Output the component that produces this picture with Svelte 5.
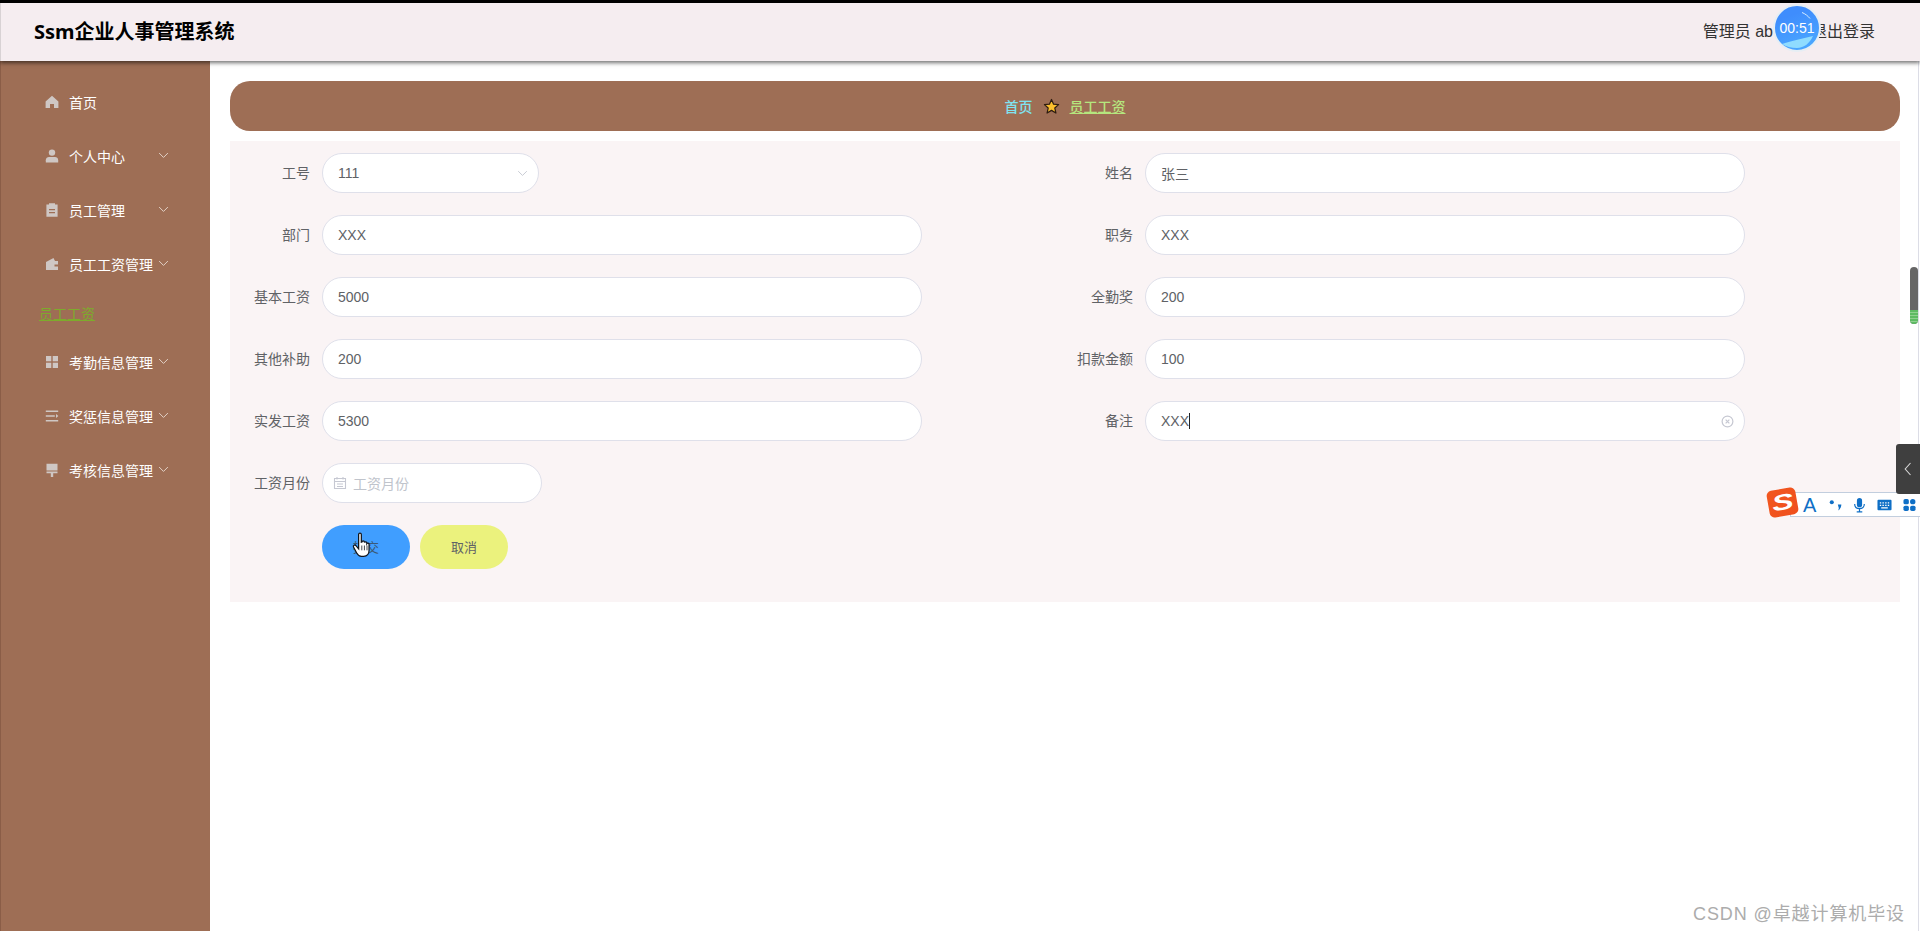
<script>
  const menu = [
    { label: '首页', icon: 'home', arrow: false },
    { label: '个人中心', icon: 'user', arrow: true },
    { label: '员工管理', icon: 'order', arrow: true },
    { label: '员工工资管理', icon: 'wallet', arrow: true, sub: '员工工资' },
    { label: '考勤信息管理', icon: 'grid', arrow: true },
    { label: '奖惩信息管理', icon: 'ops', arrow: true },
    { label: '考核信息管理', icon: 'brush', arrow: true }
  ];
  const rows = [
    [{ label: '工号', value: '111', kind: 'select' }, { label: '姓名', value: '张三' }],
    [{ label: '部门', value: 'XXX' }, { label: '职务', value: 'XXX' }],
    [{ label: '基本工资', value: '5000' }, { label: '全勤奖', value: '200' }],
    [{ label: '其他补助', value: '200' }, { label: '扣款金额', value: '100' }],
    [{ label: '实发工资', value: '5300' }, { label: '备注', value: 'XXX', kind: 'focus' }]
  ];
</script>

<div class="page">
  <div class="topline"></div>
  <header class="header">
    <div class="title">Ssm企业人事管理系统</div>
    <div class="account"><span>管理员 ab</span><span class="logout">退出登录</span></div>
  </header>
  <div class="body">
    <aside class="side">
      {#each menu as m}
        <div class="item">
          <svg class="mi" viewBox="0 0 14 14" aria-hidden="true">
            {#if m.icon === 'home'}
              <path d="M7 .8 13.4 6.600V13H9V9H5v4H.6V6.600Z" />
            {:else if m.icon === 'user'}
              <circle cx="7" cy="3.600" r="3.200" /><path d="M.8 13.400v-2.200C.8 9.200 2.400 8 4 8h6c1.600 0 3.200 1.200 3.200 3.200v2.200Z" />
            {:else if m.icon === 'order'}
              <path fill-rule="evenodd" d="M4 1.500V.3h6v1.200h2.600v12.300H1.400V1.500ZM4 6v1.200h6V6Zm0 3v1.200h6V9Z" />
            {:else if m.icon === 'wallet'}
              <path d="M1 5 8.500 1 10 4H13V13H1ZM9.500 7.500v2H13v-2Z" />
            {:else if m.icon === 'grid'}
              <rect x="1" y="1" width="5.300" height="5.300" /><rect x="7.700" y="1" width="5.300" height="5.300" /><rect x="1" y="7.700" width="5.300" height="5.300" /><rect x="7.700" y="7.700" width="5.300" height="5.300" />
            {:else if m.icon === 'ops'}
              <path d="M.8 1.500h12.400v1.600H.8ZM.8 6.200h9v1.600h-9ZM.8 10.900h12.400v1.600H.8ZM11 5l2.400 2L11 9Z" />
            {:else}
              <path d="M1.500.8h11v6.700h-11ZM1.500 8.500h11v1.800H8.200V14H5.800v-3.700H1.500Z" />
            {/if}
          </svg>
          <span class="ml">{m.label}</span>
          {#if m.arrow}
            <svg class="chev" viewBox="0 0 12 8" aria-hidden="true"><path d="M1 1.200 6 6.200l5-5" /></svg>
          {/if}
        </div>
        {#if m.sub}
          <div class="subitem"><span>{m.sub}</span></div>
        {/if}
      {/each}
    </aside>
    <main class="main">
      <nav class="crumb">
        <span class="home">首页</span>
        <svg class="star" viewBox="0 0 18 18" aria-hidden="true"><path d="M9 1.600 11.200 6.500 16.500 7 12.500 10.600 13.700 15.900 9 13.100 4.300 15.900 5.500 10.600 1.500 7 6.800 6.500Z" /></svg>
        <span class="cur">员工工资</span>
      </nav>
      <form class="form">
        {#each rows as row}
          {#each row as f}
            <div class="field">
              <span class="lab">{f.label}</span>
              <div class="input" class:short={f.kind === 'select'}>
                <span class="val">{f.value}</span>
                {#if f.kind === 'focus'}<span class="caret"></span>{/if}
                {#if f.kind === 'select'}
                  <svg class="sel" viewBox="0 0 14 8" aria-hidden="true"><path d="M1.500 1 7 6.500 12.500 1" /></svg>
                {/if}
                {#if f.kind === 'focus'}
                  <svg class="clear" viewBox="0 0 14 14" aria-hidden="true"><circle cx="7" cy="7" r="5.800" /><path d="M5 5l4 4M9 5l-4 4" /></svg>
                {/if}
              </div>
            </div>
          {/each}
        {/each}
        <div class="field wide">
          <span class="lab">工资月份</span>
          <div class="input date">
            <svg class="cal" viewBox="0 0 14 14" aria-hidden="true"><path d="M1.500 2.500h11v10h-11ZM1.500 5.500h11M4 1v2.500M10 1v2.500M4 8h6M4 10.500h6" /></svg>
            <span class="ph">工资月份</span>
          </div>
        </div>
        <div class="btns">
          <button type="button" class="btn ok">提交</button>
          <button type="button" class="btn no">取消</button>
        </div>
      </form>
    </main>
    <div class="rail"></div>
  </div>

  <div class="timer">
    <svg class="gloss" viewBox="0 0 44 44" aria-hidden="true"><path class="arc" d="M27 6.500c3 1.200 6 3.400 8 6" /><path class="wave" d="M7 38c8-3 20-5 31-8-3 7-9 12-16 12-6 0-11-1.500-15-4Z" /></svg>
    <span>00:51</span>
  </div>
  <svg class="cursor" viewBox="0 0 20 28" aria-hidden="true">
    <path d="M6.500 2.500c0-1.800 2.800-1.800 2.800 0v8l.6-.2c0-1.500 2.600-1.500 2.600 0v.6c.4-1.100 2.500-1 2.500.4v.8c.5-.9 2.300-.7 2.300.7v6.500c0 3.300-2 6-5.500 6h-2.500c-2.500 0-3.700-1.500-4.800-3.500L1.200 15.500c-.8-1.600 1.400-2.800 2.500-1.300l2.800 3.300Z" />
    <path class="lines" d="M9.800 14v5M12.500 14v5M15.200 14v5" />
  </svg>
  <div class="scrollmark"><i></i></div>
  <div class="drawer">
    <svg viewBox="0 0 8 14" aria-hidden="true"><path d="M6.500 1 1.200 7l5.300 6" /></svg>
  </div>
  <div class="ime">
    <div class="logo"><span>S</span></div>
    <span class="ime-a">A</span>
    <svg class="ime-i punct" viewBox="0 0 14 14" aria-hidden="true"><circle cx="3" cy="4" r="2.200" /><path d="M9.500 6.500h3.800c0 2.800-1.200 5-3.500 6.500.7-1.500 1-2.700.5-3.500Z" /></svg>
    <svg class="ime-i mic" viewBox="0 0 14 16" aria-hidden="true"><rect x="4.200" y=".5" width="5.600" height="10" rx="2.800" /><path class="o" d="M1.800 7c0 3 2.200 5 5.200 5s5.200-2 5.200-5M7 12v3M4 15.300h6" /></svg>
    <svg class="ime-i kb" viewBox="0 0 16 12" aria-hidden="true"><path fill-rule="evenodd" d="M1.500.5h13a1 1 0 0 1 1 1v9a1 1 0 0 1-1 1h-13a1 1 0 0 1-1-1v-9a1 1 0 0 1 1-1ZM3 3v1.300h1.500V3Zm2.800 0v1.300h1.500V3Zm2.900 0v1.300h1.500V3Zm2.800 0v1.300H13V3ZM3 5.700V7h1.500V5.700Zm2.800 0V7h1.500V5.700Zm2.900 0V7h1.500V5.700Zm2.800 0V7H13V5.700ZM4.500 8.500v1.200h7V8.500Z" /></svg>
    <svg class="ime-i" viewBox="0 0 14 14" aria-hidden="true"><rect x=".5" y=".5" width="5.800" height="5.800" rx="1.800" /><circle cx="10.500" cy="3.400" r="2.900" /><rect x=".5" y="7.700" width="5.800" height="5.800" rx="1.800" /><rect x="7.700" y="7.700" width="5.800" height="5.800" rx="1.800" /></svg>
  </div>
  <div class="mark">CSDN @卓越计算机毕设</div>
</div>

<style>
  :global(body) {
    margin: 0;
    background: #fff;
  }
  .page {
    position: relative;
    width: 1920px;
    height: 931px;
    overflow: hidden;
    font-family: "Liberation Sans", "Noto Sans CJK SC", sans-serif;
    font-size: 14px;
    color: #606266;
  }
  .topline {
    height: 3px;
    background: #000;
  }
  .header {
    position: relative;
    z-index: 2;
    height: 58px;
    box-sizing: border-box;
    display: flex;
    align-items: center;
    justify-content: space-between;
    padding: 0 45px 0 33px;
    background: #f5edf0;
    border-left: 1px solid #d8d2d4;
    box-shadow: 0 2px 4px rgba(0, 0, 0, 0.55);
  }
  .title {
    font-family: "Noto Sans", "Noto Sans CJK SC", sans-serif;
    font-size: 20px;
    font-weight: 700;
    color: #000;
    margin-top: -3px;
  }
  .account {
    display: flex;
    gap: 38px;
    font-size: 16px;
    color: #333;
    margin-top: -4px;
  }
  .body {
    display: flex;
    height: 870px;
  }
  .side {
    width: 210px;
    flex: none;
    box-sizing: border-box;
    padding-top: 14px;
    background: #9e6e55;
    border-left: 1px solid #8a5d47;
  }
  .item {
    height: 54px;
    display: flex;
    align-items: center;
    padding-left: 44px;
    color: #fff;
    font-size: 14px;
  }
  .mi {
    width: 14px;
    height: 14px;
    fill: #cfc7c4;
    flex: none;
  }
  .ml {
    margin-left: 10px;
    width: 85px;
    white-space: nowrap;
  }
  .chev {
    width: 11px;
    height: 7px;
    margin-left: 4px;
    margin-top: -2px;
    fill: none;
    stroke: #e4d4ca;
    stroke-width: 1.100;
  }
  .subitem {
    height: 44px;
    display: flex;
    align-items: center;
    padding-left: 38px;
    color: #7dab2c;
    font-size: 14px;
  }
  .subitem span {
    text-decoration: underline;
  }
  .main {
    flex: 1;
    padding: 20px 20px 0;
    min-width: 0;
  }
  .crumb {
    height: 50px;
    display: flex;
    align-items: center;
    justify-content: center;
    gap: 10px;
    background: #9e6e55;
    border-radius: 20px;
    font-size: 14px;
    font-weight: 500;
  }
  .crumb span {
    margin-top: -1px;
  }
  .home {
    color: #7fe3f0;
  }
  .cur {
    color: #b5e67e;
    text-decoration: underline;
  }
  .star {
    width: 17px;
    height: 17px;
    fill: #fbbf2d;
    stroke: #2e1c10;
    stroke-width: 1.300;
    stroke-linejoin: round;
  }
  .form {
    margin-top: 10px;
    padding: 12px 24px 33px 0;
    background: #faf4f5;
    display: grid;
    grid-template-columns: 823px 823px;
    row-gap: 22px;
  }
  .field {
    display: flex;
    align-items: center;
    height: 40px;
  }
  .wide {
    grid-column: 1 / -1;
  }
  .lab {
    width: 80px;
    flex: none;
    text-align: right;
    margin-right: 12px;
    padding-bottom: 2px;
  }
  .input {
    position: relative;
    width: 600px;
    height: 40px;
    box-sizing: border-box;
    display: flex;
    align-items: center;
    padding-left: 15px;
    background: #fff;
    border: 1px solid #dfe0ea;
    border-radius: 20px;
  }
  .input.short {
    width: 217px;
  }
  .input.date {
    width: 220px;
    padding-left: 10px;
  }
  .caret {
    width: 1px;
    height: 16px;
    background: #222;
  }
  .sel {
    position: absolute;
    right: 10px;
    top: 16px;
    width: 11px;
    height: 7px;
    fill: none;
    stroke: #c6c9d1;
    stroke-width: 1.200;
  }
  .clear {
    position: absolute;
    right: 10px;
    top: 13px;
    width: 13px;
    height: 13px;
    fill: none;
    stroke: #c6c8d2;
    stroke-width: 1.300;
  }
  .cal {
    width: 14px;
    height: 14px;
    fill: none;
    stroke: #c6c8d2;
    stroke-width: 1.100;
    margin-right: 6px;
  }
  .ph {
    color: #c0c4cc;
  }
  .btns {
    grid-column: 1 / -1;
    display: flex;
    gap: 10px;
    padding-left: 92px;
  }
  .btn {
    width: 88px;
    height: 44px;
    border: 0;
    border-radius: 22px;
    font: inherit;
    font-size: 13px;
    color: #606266;
    padding: 0 0 2px;
  }
  .ok {
    background: #409eff;
    color: #3b5a78;
  }
  .no {
    background: #ebf27d;
  }
  .rail {
    position: absolute;
    top: 61px;
    right: 1px;
    width: 1px;
    height: 870px;
    background: #dcdde6;
  }
  .timer {
    position: absolute;
    top: 4px;
    left: 1773px;
    width: 48px;
    height: 48px;
    box-sizing: border-box;
    border: 2px solid #e6eef4;
    border-radius: 50%;
    overflow: hidden;
    background: linear-gradient(160deg, #3f8dfd 25%, #4aa6ff 85%);
    display: flex;
    align-items: center;
    justify-content: center;
    color: #fff;
    font-size: 14px;
    z-index: 3;
  }
  .timer span {
    position: relative;
    margin-top: 0;
  }
  .gloss {
    position: absolute;
    inset: 0;
    width: 44px;
    height: 44px;
  }
  .arc {
    fill: none;
    stroke: #d6ecff;
    stroke-width: 1;
  }
  .wave {
    fill: #8fdcff;
  }
  .cursor {
    position: absolute;
    left: 352px;
    top: 532px;
    width: 20px;
    height: 27px;
    fill: #fff;
    stroke: #10151d;
    stroke-width: 1.300;
    z-index: 3;
  }
  .lines {
    fill: none;
    stroke-width: 0.800;
  }
  .scrollmark {
    position: absolute;
    left: 1910px;
    top: 267px;
    width: 8px;
    height: 57px;
    border-radius: 4px;
    overflow: hidden;
    background: #666;
  }
  .scrollmark i {
    display: block;
    margin-top: 43px;
    height: 14px;
    background: repeating-linear-gradient(#5dbb63 0 2px, #8fd08f 2px 3px);
  }
  .drawer {
    position: absolute;
    left: 1896px;
    top: 444px;
    width: 24px;
    height: 50px;
    background: #3f3f3f;
    border-radius: 3px 0 0 3px;
    display: flex;
    align-items: center;
    justify-content: center;
    z-index: 4;
  }
  .drawer svg {
    width: 8px;
    height: 14px;
    fill: none;
    stroke: #d8d8d8;
    stroke-width: 1.100;
  }
  .ime {
    position: absolute;
    left: 1790px;
    top: 492px;
    width: 130px;
    height: 25px;
    box-sizing: border-box;
    display: flex;
    align-items: center;
    gap: 11px;
    padding-left: 12px;
    background: #fff;
    border: 1px solid #c2cede;
    border-right: 0;
  }
  .logo {
    position: absolute;
    left: -23px;
    top: -4px;
    width: 29px;
    height: 27px;
    border-radius: 5px;
    background: linear-gradient(135deg, #f2571f, #ef4f1d);
    transform: rotate(-10deg);
    display: flex;
    align-items: center;
    justify-content: center;
    color: #fff;
    font: italic 700 26px/27px "Liberation Sans", sans-serif;
    overflow: hidden;
  }
  .logo span {
    transform: scale(1.25, 0.85);
  }
  .ime-a {
    font-size: 20px;
    line-height: 1;
    color: #0f6fc6;
    width: 15px;
    font-family: "Liberation Sans", sans-serif;
  }
  .ime-i {
    width: 13px;
    height: 14px;
    fill: #0f6fc6;
    flex: none;
  }
  .ime-i.punct {
    width: 13px;
  }
  .ime-i.mic {
    height: 16px;
  }
  .ime-i.kb {
    width: 15px;
  }
  .ime-i .o {
    fill: none;
    stroke: #0f6fc6;
    stroke-width: 1.300;
  }
  .mark {
    position: absolute;
    right: 15px;
    top: 899px;
    font-size: 18px;
    color: #acacac;
    letter-spacing: 0.9px;
  }
</style>
